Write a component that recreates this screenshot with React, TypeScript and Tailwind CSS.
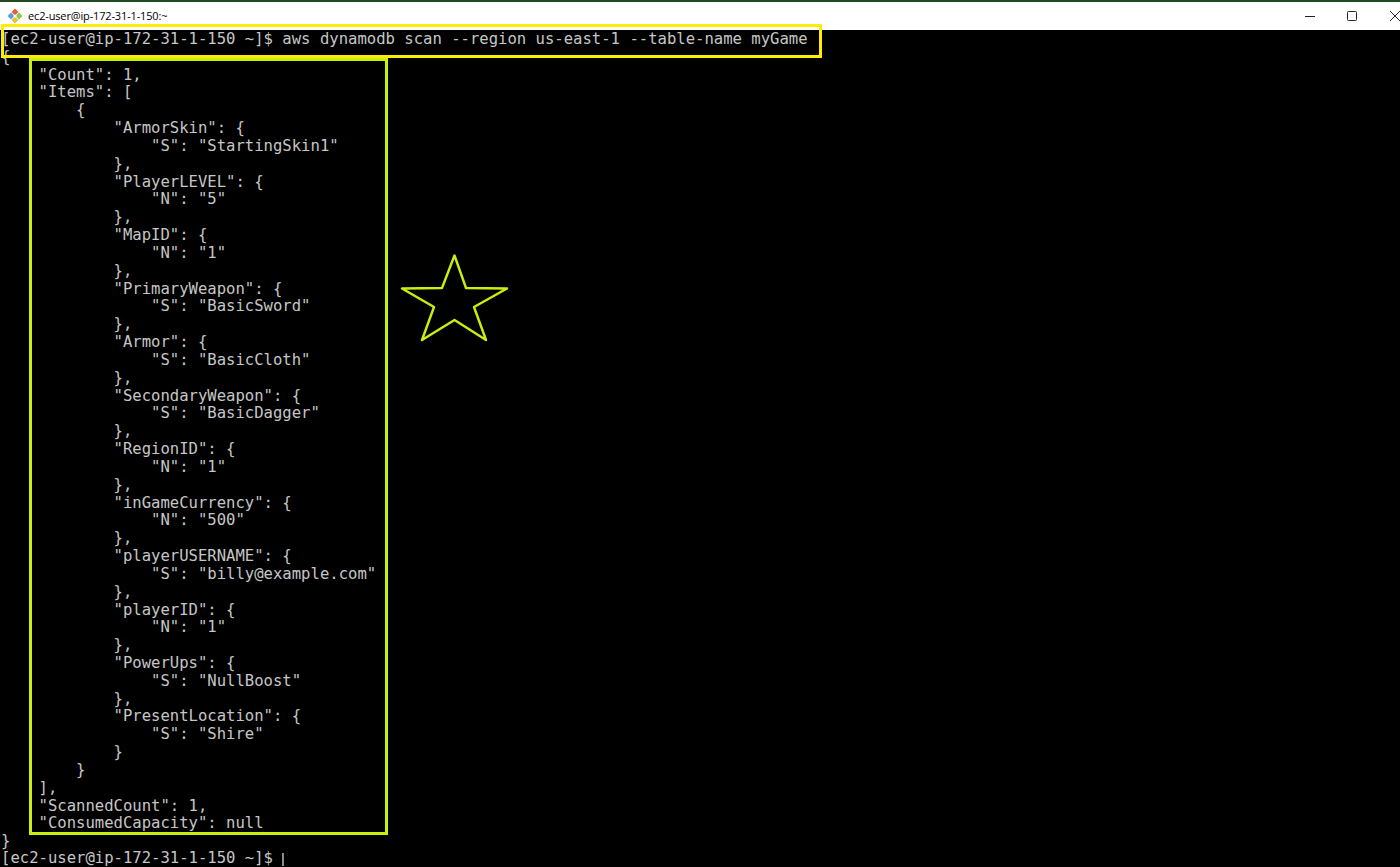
import React from "react";

const prompt = "[ec2-user@ip-172-31-1-150 ~]$ ";

const lines = [
  prompt + "aws dynamodb scan --region us-east-1 --table-name myGame",
  "{",
  '    "Count": 1,',
  '    "Items": [',
  "        {",
  '            "ArmorSkin": {',
  '                "S": "StartingSkin1"',
  "            },",
  '            "PlayerLEVEL": {',
  '                "N": "5"',
  "            },",
  '            "MapID": {',
  '                "N": "1"',
  "            },",
  '            "PrimaryWeapon": {',
  '                "S": "BasicSword"',
  "            },",
  '            "Armor": {',
  '                "S": "BasicCloth"',
  "            },",
  '            "SecondaryWeapon": {',
  '                "S": "BasicDagger"',
  "            },",
  '            "RegionID": {',
  '                "N": "1"',
  "            },",
  '            "inGameCurrency": {',
  '                "N": "500"',
  "            },",
  '            "playerUSERNAME": {',
  '                "S": "billy@example.com"',
  "            },",
  '            "playerID": {',
  '                "N": "1"',
  "            },",
  '            "PowerUps": {',
  '                "S": "NullBoost"',
  "            },",
  '            "PresentLocation": {',
  '                "S": "Shire"',
  "            }",
  "        }",
  "    ],",
  '    "ScannedCount": 1,',
  '    "ConsumedCapacity": null',
  "}",
];

function GitIcon() {
  return (
    <svg width="16" height="16" viewBox="0 0 16 16">
      <path d="M8 0.5 L11.5 4 L8 7.5 L4.5 4 Z" fill="#e2603c" />
      <path d="M4 4.5 L7.5 8 L4 11.5 L0.5 8 Z" fill="#5aa0dc" />
      <path d="M12 4.5 L15.5 8 L12 11.5 L8.5 8 Z" fill="#8cc850" />
      <path d="M8 8.5 L11.5 12 L8 15.5 L4.5 12 Z" fill="#e8c040" />
      <circle cx="8" cy="8" r="1.6" fill="#ffffff" />
    </svg>
  );
}

function TitleBar() {
  return (
    <div className="flex h-[30px] shrink-0 items-center border-t-2 border-[#1d4a1f] bg-white pl-[7px]">
      <GitIcon />
      <span className="ml-[5px] font-['Open_Sans',sans-serif] text-[11px] tracking-[-0.15px] text-black">
        ec2-user@ip-172-31-1-150:~
      </span>
      <div className="ml-auto flex items-center text-[#222]">
        <svg width="10" height="10" viewBox="0 0 10 10" className="mr-[32px]">
          <path d="M0 5.5 H10" stroke="currentColor" strokeWidth="1" />
        </svg>
        <svg width="10" height="10" viewBox="0 0 10 10" className="mr-[33px]">
          <rect x="0.5" y="0.5" width="9" height="9" rx="1" fill="none" stroke="currentColor" strokeWidth="1" />
        </svg>
        <svg width="10" height="10" viewBox="0 0 10 10">
          <path d="M0 0 L10 10 M10 0 L0 10" stroke="currentColor" strokeWidth="1" />
        </svg>
      </div>
    </div>
  );
}

export default function App() {
  return (
    <div className="relative flex h-[867px] w-[1400px] flex-col overflow-hidden bg-black">
      <TitleBar />
      <div className="relative flex-1 pl-[1px] pt-[1px]">
        <pre className="font-['DejaVu_Sans_Mono',monospace] text-[15.59px] leading-[17.83px] text-[#c6c6c6]">
          {lines.map((line, i) => (
            <div key={i} className="h-[17.83px]">
              {line}
            </div>
          ))}
          <div className="-mt-[1px] h-[17px]">
            {prompt}
            <span className="inline-block h-[13px] w-[2px] translate-y-[3px] bg-[#8a8a8a]" />
          </div>
        </pre>
      </div>

      {/* annotations drawn over the terminal */}
      <div className="absolute left-[1px] top-[24px] h-[34px] w-[821px] border-[3px] border-[#fdec06]" />
      <div className="absolute left-[29px] top-[58px] h-[777px] w-[359px] border-[3px] border-[#c8f00a]" />
      <svg
        className="absolute left-[400px] top-[252px]"
        width="110"
        height="92"
        viewBox="0 0 110 92"
      >
        <path
          d="M54.5 3.5 L66 36 L107 36.5 L74 55 L86 88 L54.5 68 L22 88 L34 55 L2 36.5 L42 36 Z"
          fill="none"
          stroke="#c8f00a"
          strokeWidth="2.4"
          strokeLinejoin="round"
        />
      </svg>
    </div>
  );
}
